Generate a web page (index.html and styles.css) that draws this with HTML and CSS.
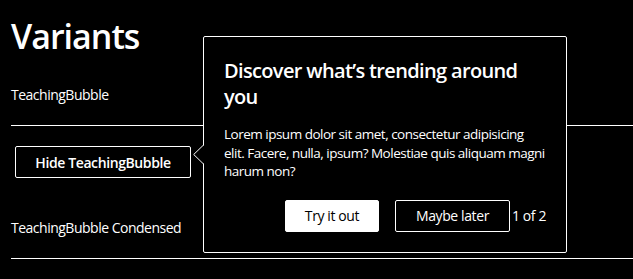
FILE: index.html
```html
<!DOCTYPE html>
<html lang="en">
<head>
<meta charset="utf-8">
<title>Variants</title>
<link rel="stylesheet" href="styles.css">
</head>
<body>
<main class="page">
  <h1 class="title">Variants</h1>
  <section class="variant">
    <p class="label">TeachingBubble</p>
    <hr class="divider">
    <div class="anchor">
      <button class="btn-outline">Hide TeachingBubble</button>
      <div class="bubble" role="dialog">
        <svg class="beak" width="12" height="20" viewBox="0 0 12 20" aria-hidden="true">
          <polygon points="11,0.5 10.5,0.5 0.5,9.5 10.5,18.5 11,18.5" fill="#000"/>
          <polyline points="10.5,0 0.7,9.5 10.5,19" fill="none" stroke="#fff" stroke-width="1"/>
        </svg>
        <h2 class="bubble-title">Discover what’s trending around you</h2>
        <p class="bubble-body">Lorem ipsum dolor sit amet, consectetur adipisicing<br>elit. Facere, nulla, ipsum? Molestiae quis aliquam magni harum non?</p>
        <div class="bubble-footer">
          <button class="btn-primary">Try it out</button>
          <button class="btn-secondary">Maybe later</button>
          <span class="count">1 of 2</span>
        </div>
      </div>
    </div>
  </section>
  <section class="variant">
    <p class="label label-condensed">TeachingBubble Condensed</p>
    <hr class="divider divider-last">
  </section>
</main>
</body>
</html>
```

FILE: styles.css
```css
* { box-sizing: border-box; }
html, body {
  margin: 0;
  padding: 0;
  background: #000;
  color: #fff;
  font-family: "Segoe UI", "Open Sans", "Liberation Sans", sans-serif;
}
.page {
  padding-left: 11px;
  overflow: hidden;
  height: 279px;
}
.title {
  margin: 16px 0 0;
  font-size: 34px;
  line-height: 40px;
  font-weight: 600;
  letter-spacing: -1px;
}
.label {
  margin: 29px 0 0;
  font-size: 14px;
  line-height: 20px;
  letter-spacing: -0.5px;
}
.label-condensed { margin-top: 40px; }
.divider {
  margin: 20px 0 0;
  border: 0;
  border-top: 1px solid #fff;
  height: 0;
}
.anchor {
  position: relative;
  margin: 20px 0 0 4px;
  width: 176px;
  height: 32px;
}
button {
  font-family: inherit;
  font-size: 14px;
  border-radius: 2px;
  padding: 0;
  cursor: pointer;
}
.btn-outline {
  width: 176px;
  height: 32px;
  background: #000;
  color: #fff;
  border: 1px solid #fff;
  font-weight: 600;
  letter-spacing: -0.4px;
}
.bubble {
  position: absolute;
  left: 188px;
  top: -110px;
  width: 364px;
  height: 217px;
  background: #000;
  border: 1px solid #fff;
  border-radius: 2px;
  padding: 21px 20px 0 20px;
}
.beak {
  position: absolute;
  left: -11px;
  top: 108px;
  display: block;
}
.bubble-title {
  margin: 0;
  font-size: 20px;
  line-height: 26px;
  font-weight: 600;
  letter-spacing: -0.65px;
}
.bubble-body {
  margin: 15px 0 0;
  font-size: 13.5px;
  line-height: 18.5px;
  letter-spacing: -0.5px;
}
.bubble-footer {
  margin-top: 19px;
  display: flex;
  justify-content: flex-end;
  align-items: center;
}
.btn-primary {
  width: 94px;
  height: 32px;
  background: #fff;
  color: #000;
  border: 1px solid #fff;
  margin-right: 16px;
  letter-spacing: -0.4px;
}
.btn-secondary {
  width: 115px;
  height: 32px;
  background: #000;
  color: #fff;
  border: 1px solid #fff;
  letter-spacing: -0.4px;
}
.count {
  margin-left: 2px;
  font-size: 14px;
  letter-spacing: -0.4px;
}
```
